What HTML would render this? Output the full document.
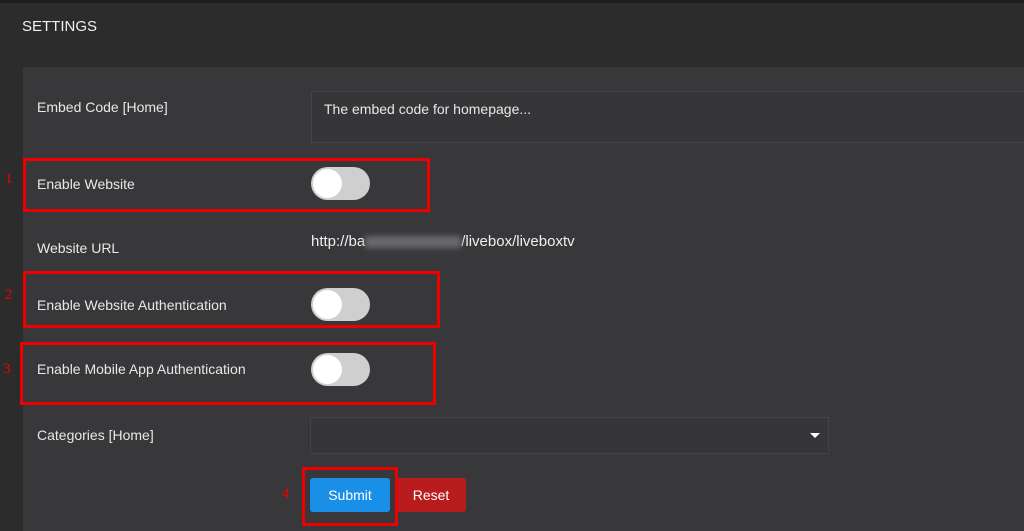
<!DOCTYPE html>
<html><head><meta charset="utf-8"><style>
*{margin:0;padding:0;box-sizing:border-box}
body{width:1024px;height:531px;background:#2c2c2d;font-family:"Liberation Sans",sans-serif;position:relative;overflow:hidden;color:#e6e6e6}
.top{position:absolute;left:0;top:0;width:1024px;height:3px;background:#1e1e1f}
.title{position:absolute;left:22px;top:18px;font-size:15px;color:#f0f0f0}
.panel{position:absolute;left:23px;top:67px;width:1001px;height:464px;background:#38383a}
.lbl{position:absolute;left:37px;font-size:14px;color:#e8e8e8}
.box{position:absolute;border:1px solid #444446;background:#363638}
.tog{position:absolute;left:311px;width:59px;height:33px;border-radius:17px;background:#cfcfcf}
.tog:after{content:"";position:absolute;left:2px;top:2px;width:29px;height:29px;border-radius:50%;background:#fff}
.red{position:absolute;border:3px solid #ee0000}
.num{position:absolute;color:#e00;font-family:"Liberation Serif",serif;font-size:15px}
.btn{position:absolute;top:478px;height:34px;border-radius:3px;color:#fff;font-size:14px;text-align:center;line-height:34px}
</style></head><body>
<div class="top"></div>
<div class="title">SETTINGS</div>
<div class="panel"></div>
<div class="lbl" style="top:99px">Embed Code [Home]</div>
<div class="box" style="left:311px;top:91px;width:720px;height:52px"></div>
<div style="position:absolute;left:324px;top:101px;font-size:14px;color:#e8e8e8">The embed code for homepage...</div>

<div class="lbl" style="top:176px">Enable Website</div>
<div class="tog" style="top:167px"></div>
<div class="red" style="left:23px;top:158px;width:407px;height:54px"></div>
<div class="num" style="left:5px;top:171px">1</div>

<div class="lbl" style="top:240px">Website URL</div>
<div style="position:absolute;left:311px;top:233px;font-size:15px;color:#f0f0f0">http://ba<span style="display:inline-block;width:96px;height:12px;background:#6a6a6c;filter:blur(3px);vertical-align:middle"></span>/livebox/liveboxtv</div>

<div class="lbl" style="top:297px">Enable Website Authentication</div>
<div class="tog" style="top:288px"></div>
<div class="red" style="left:23px;top:271px;width:417px;height:57px"></div>
<div class="num" style="left:5px;top:287px">2</div>

<div class="lbl" style="top:361px">Enable Mobile App Authentication</div>
<div class="tog" style="top:353px"></div>
<div class="red" style="left:20px;top:342px;width:416px;height:63px"></div>
<div class="num" style="left:3px;top:361px">3</div>

<div class="lbl" style="top:427px">Categories [Home]</div>
<div class="box" style="left:310px;top:417px;width:519px;height:37px"></div>
<div style="position:absolute;left:810px;top:433px;width:0;height:0;border-left:5px solid transparent;border-right:5px solid transparent;border-top:5px solid #fff"></div>

<div class="btn" style="left:310px;width:80px;background:#1a8fe8">Submit</div>
<div class="btn" style="left:396px;width:70px;background:#b91c1c">Reset</div>
<div class="red" style="left:302px;top:467px;width:96px;height:59px"></div>
<div class="num" style="left:282px;top:486px">4</div>
</body></html>
